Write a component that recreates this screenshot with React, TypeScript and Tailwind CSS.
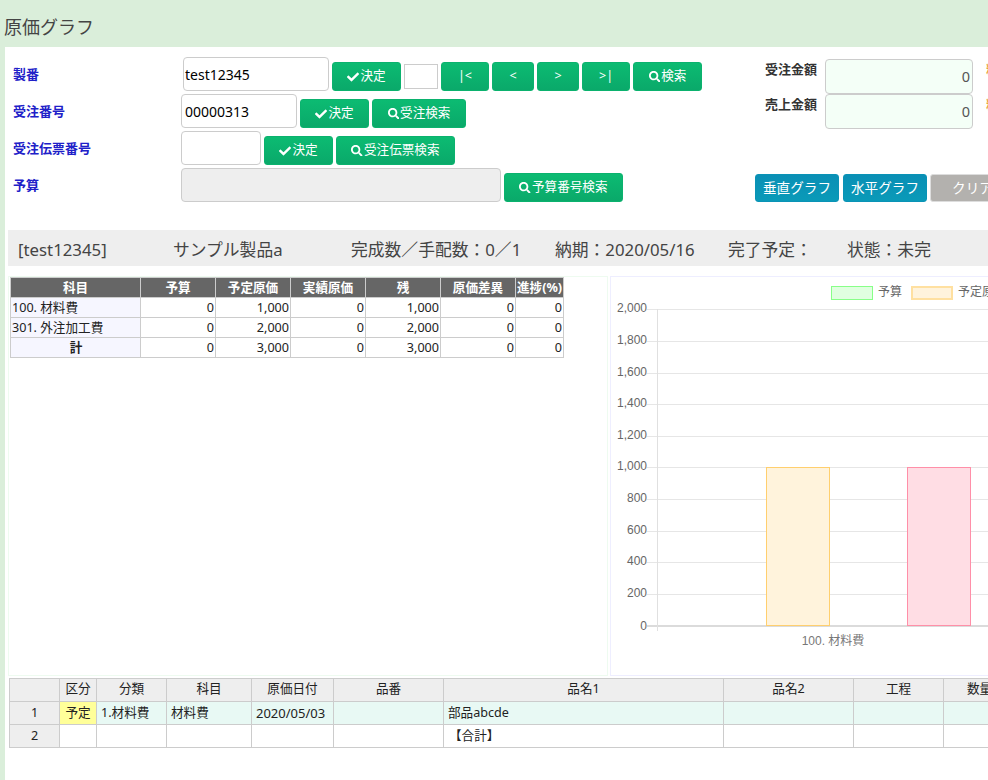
import React from "react";
import { FaCheck, FaSearch } from "react-icons/fa";

const green = "flex items-center justify-center h-[29px] rounded-[3px] border border-[#0bb26e] bg-gradient-to-b from-[#0cbb72] to-[#0aa96a] text-white text-[12.6px] shrink-0";
const blue = "flex items-center justify-center h-[28px] w-[84px] rounded-[3px] border border-[#0a93b6] bg-gradient-to-b from-[#0a8fb5] to-[#0a9ab8] text-white text-[13.6px] shrink-0";
const inputCls = "h-[34px] rounded-[4px] border border-[#ccc] text-[14px] text-black shrink-0 flex items-center";

function Btn({ w, icon, children }: { w: string; icon?: "check" | "search"; children: React.ReactNode }) {
  return (
    <div className={`${green} ${w}`}>
      {icon === "check" && <FaCheck className="w-[12px] h-[12px] mr-[1px]" />}
      {icon === "search" && <FaSearch className="w-[11.5px] h-[11.5px] mr-[1px]" />}
      {children}
    </div>
  );
}

function Label({ children }: { children: React.ReactNode }) {
  return <div className="w-[176px] pl-[8px] pt-[2px] text-[13px] font-bold text-[#2020c8] shrink-0">{children}</div>;
}

function Money({ label }: { label: string }) {
  return (
    <div className="flex items-start h-[35px]">
      <div className="w-[60px] shrink-0 text-[13px] font-bold text-[#333] pt-[1px]">{label}</div>
      <div className="w-[148px] h-[35px] shrink-0 rounded-[4px] border border-[#ccc] bg-[#f4fff7] pr-[2px] text-[14.5px] text-[#555] flex items-center justify-end">0</div>
      <div className="ml-[13px] shrink-0 text-[13px] font-bold text-[#e8a33d] pt-[1px] whitespace-nowrap">粗利</div>
    </div>
  );
}

const summary = [
  ["100. 材料費", "0", "1,000", "0", "1,000", "0", "0"],
  ["301. 外注加工費", "0", "2,000", "0", "2,000", "0", "0"],
  ["計", "0", "3,000", "0", "3,000", "0", "0"],
];

const detailHead = ["", "区分", "分類", "科目", "原価日付", "品番", "品名1", "品名2", "工程", "数量"];

function Chart() {
  const ys = [309, 341, 373, 404, 436, 467, 499, 531, 562, 594];
  const labels = ["2,000", "1,800", "1,600", "1,400", "1,200", "1,000", "800", "600", "400", "200"];
  const ox = 611;
  const oy = 277;
  return (
    <svg width="377" height="398" viewBox={`${ox} ${oy} 377 398`} className="block" style={{ fontFamily: '"Liberation Sans","Noto Sans CJK JP",sans-serif' }}>
      {ys.map((y, i) => (
        <g key={y}>
          <line x1="647" x2="988" y1={y + 0.5} y2={y + 0.5} stroke="#e6e6e6" strokeWidth={1} />
          <text x="647" y={y + 3} textAnchor="end" fontSize="12" fill="#666">{labels[i]}</text>
        </g>
      ))}
      <line x1="647" x2="988" y1="626" y2="626" stroke="#cfcfcf" strokeWidth={1.5} />
      <text x="647" y="630" textAnchor="end" fontSize="12" fill="#666">0</text>
      <line x1="657.5" x2="657.5" y1="309" y2="631" stroke="#e0e0e0" />
      <rect x="766.5" y="467.5" width="63" height="158" fill="#fff3dc" stroke="#ffcf6e" />
      <rect x="907.5" y="467.5" width="63" height="158" fill="#ffdde4" stroke="#ff8fa8" />
      <rect x="831.5" y="286.5" width="41" height="13" fill="#e0ffe0" stroke="#88ff88" />
      <text x="878" y="296" fontSize="12" fill="#666">予算</text>
      <rect x="912" y="287" width="40" height="12" fill="#fff3dc" stroke="#ffe0a0" strokeWidth="2" />
      <text x="958" y="296" fontSize="12" fill="#666">予定原価</text>
      <text x="833" y="645" textAnchor="middle" fontSize="12" fill="#777">100. 材料費</text>
    </svg>
  );
}

export default function App() {
  return (
    <div
      className="w-[988px] h-[780px] overflow-hidden bg-[#daeeda] text-[#333]"
      style={{ fontFamily: '"Noto Sans","Noto Sans CJK JP",sans-serif' }}
    >
      <div className="h-[47px] pl-[4px] pt-[14px] text-[18px] leading-[26px] text-[#444]">原価グラフ</div>

      <div className="ml-[5px] h-[733px] bg-white w-[983px] overflow-hidden">
        <div className="flex h-[183px]">
          <div className="w-[740px] shrink-0 pt-[10px] flex flex-col gap-[3px]">
            <div className="flex items-center h-[34px]">
              <Label>製番</Label>
              <div className={`${inputCls} w-[146px] ml-[2px] pl-[1px]`}>test12345</div>
              <div className="flex items-center gap-[3px] ml-[3px] mt-[5px]">
                <Btn w="w-[69px]" icon="check">決定</Btn>
                <div className="w-[34px] h-[25px] border border-[#ccc] shrink-0" />
                <Btn w="w-[48px]">|&lt;</Btn>
                <Btn w="w-[42px]">&lt;</Btn>
                <Btn w="w-[42px]">&gt;</Btn>
                <Btn w="w-[48px]">&gt;|</Btn>
                <Btn w="w-[69px]" icon="search">検索</Btn>
              </div>
            </div>
            <div className="flex items-center h-[34px]">
              <Label>受注番号</Label>
              <div className={`${inputCls} w-[116px] pl-[3px]`}>00000313</div>
              <div className="flex items-center gap-[3px] ml-[3px] mt-[5px]">
                <Btn w="w-[69px]" icon="check">決定</Btn>
                <Btn w="w-[94px]" icon="search">受注検索</Btn>
              </div>
            </div>
            <div className="flex items-center h-[34px]">
              <Label>受注伝票番号</Label>
              <div className={`${inputCls} w-[80px]`} />
              <div className="flex items-center gap-[3px] ml-[3px] mt-[5px]">
                <Btn w="w-[69px]" icon="check">決定</Btn>
                <Btn w="w-[119px]" icon="search">受注伝票検索</Btn>
              </div>
            </div>
            <div className="flex items-center h-[34px]">
              <Label>予算</Label>
              <div className={`${inputCls} w-[320px] bg-[#eeeeee]`} />
              <div className="flex items-center ml-[3px] mt-[5px]">
                <Btn w="w-[119px]" icon="search">予算番号検索</Btn>
              </div>
            </div>
          </div>

          <div className="flex-1 min-w-0 pt-[12px]">
            <div className="flex flex-col pl-[20px]">
              <Money label="受注金額" />
              <Money label="売上金額" />
            </div>
            <div className="flex mt-[45px] ml-[10px]">
              <div className={blue}>垂直グラフ</div>
              <div className={`${blue} ml-[4px]`}>水平グラフ</div>
              <div className="flex items-center justify-center h-[28px] w-[85px] ml-[3px] rounded-[3px] border border-[#ddd] bg-[#b3b1ae] text-white text-[13.6px] shrink-0">クリア</div>
            </div>
          </div>
        </div>

        <div className="ml-[3px] h-[36px] bg-[#eeeeee] flex items-center pt-[3px] text-[16.8px] text-[#444] whitespace-nowrap">
          <span className="ml-[10px] w-[155px]">[test12345]</span>
          <span className="w-[178px]">サンプル製品a</span>
          <span className="w-[204px]">完成数／手配数：0／1</span>
          <span className="w-[173px]">納期：2020/05/16</span>
          <span className="w-[119px]">完了予定：</span>
          <span>状態：未完</span>
        </div>

        <div className="flex mt-[10px] h-[400px] ml-[3px]">
          <div className="w-[600px] shrink-0 border border-[#eefbf0] pl-[1px]">
            <table className="table-fixed border-collapse w-[553px] text-[12.6px] text-[#222] leading-[18px]">
              <colgroup>
                <col className="w-[130px]" />
                <col className="w-[75px]" />
                <col className="w-[75px]" />
                <col className="w-[75px]" />
                <col className="w-[75px]" />
                <col className="w-[75px]" />
                <col className="w-[48px]" />
              </colgroup>
              <thead>
                <tr className="h-[20px]">
                  {["科目", "予算", "予定原価", "実績原価", "残", "原価差異", "進捗(%)"].map((h) => (
                    <th key={h} className="border border-[#ccc] bg-[#666666] text-white font-bold text-center p-0 whitespace-nowrap">{h}</th>
                  ))}
                </tr>
              </thead>
              <tbody>
                {summary.map((r) => (
                  <tr key={r[0]} className="h-[20px]">
                    {r.map((c, i) =>
                      i === 0 ? (
                        <td key={i} className={`border border-[#ccc] bg-[#f6f6ff] p-0 pl-[1px] whitespace-nowrap ${c === "計" ? "text-center font-bold" : ""}`}>{c}</td>
                      ) : (
                        <td key={i} className="border border-[#ccc] text-right p-0 pr-[1px]">{c}</td>
                      )
                    )}
                  </tr>
                ))}
              </tbody>
            </table>
          </div>
          <div className="ml-[2px] flex-1 min-w-0 border-l border-t border-b border-[#eeeeff]">
            <Chart />
          </div>
        </div>

        <div className="ml-[4px] mt-[2px]">
          <table className="table-fixed border-collapse w-[1006px] text-[12.6px] text-[#222]">
            <colgroup>
              <col className="w-[50px]" />
              <col className="w-[37px]" />
              <col className="w-[70px]" />
              <col className="w-[85px]" />
              <col className="w-[82px]" />
              <col className="w-[110px]" />
              <col className="w-[280px]" />
              <col className="w-[130px]" />
              <col className="w-[90px]" />
              <col className="w-[72px]" />
            </colgroup>
            <thead>
              <tr className="h-[23px]">
                {detailHead.map((h, i) => (
                  <th key={i} className="border border-[#ccc] bg-[#eeeeee] font-normal text-center p-0 pb-[1px] whitespace-nowrap">{h}</th>
                ))}
              </tr>
            </thead>
            <tbody>
              <tr className="h-[23px] bg-[#e8f9f4]">
                <td className="border border-[#ccc] bg-[#eeeeee] text-center p-0">1</td>
                <td className="border border-[#ccc] bg-[#ffff99] text-center p-0 pt-[1px]">予定</td>
                <td className="border border-[#ccc] p-0 pt-[1px] pl-[4px]">1.材料費</td>
                <td className="border border-[#ccc] p-0 pt-[1px] pl-[4px]">材料費</td>
                <td className="border border-[#ccc] p-0 pt-[1px] pl-[4px] text-[13px]">2020/05/03</td>
                <td className="border border-[#ccc] p-0"></td>
                <td className="border border-[#ccc] p-0 pt-[1px] pl-[4px]">部品abcde</td>
                <td className="border border-[#ccc] p-0"></td>
                <td className="border border-[#ccc] p-0"></td>
                <td className="border border-[#ccc] p-0"></td>
              </tr>
              <tr className="h-[23px]">
                <td className="border border-[#ccc] bg-[#eeeeee] text-center p-0">2</td>
                <td className="border border-[#ccc] p-0"></td>
                <td className="border border-[#ccc] p-0"></td>
                <td className="border border-[#ccc] p-0"></td>
                <td className="border border-[#ccc] p-0"></td>
                <td className="border border-[#ccc] p-0"></td>
                <td className="border border-[#ccc] p-0 pt-[1px] pl-[5px]">【合計】</td>
                <td className="border border-[#ccc] p-0"></td>
                <td className="border border-[#ccc] p-0"></td>
                <td className="border border-[#ccc] p-0"></td>
              </tr>
            </tbody>
          </table>
        </div>
      </div>
    </div>
  );
}
